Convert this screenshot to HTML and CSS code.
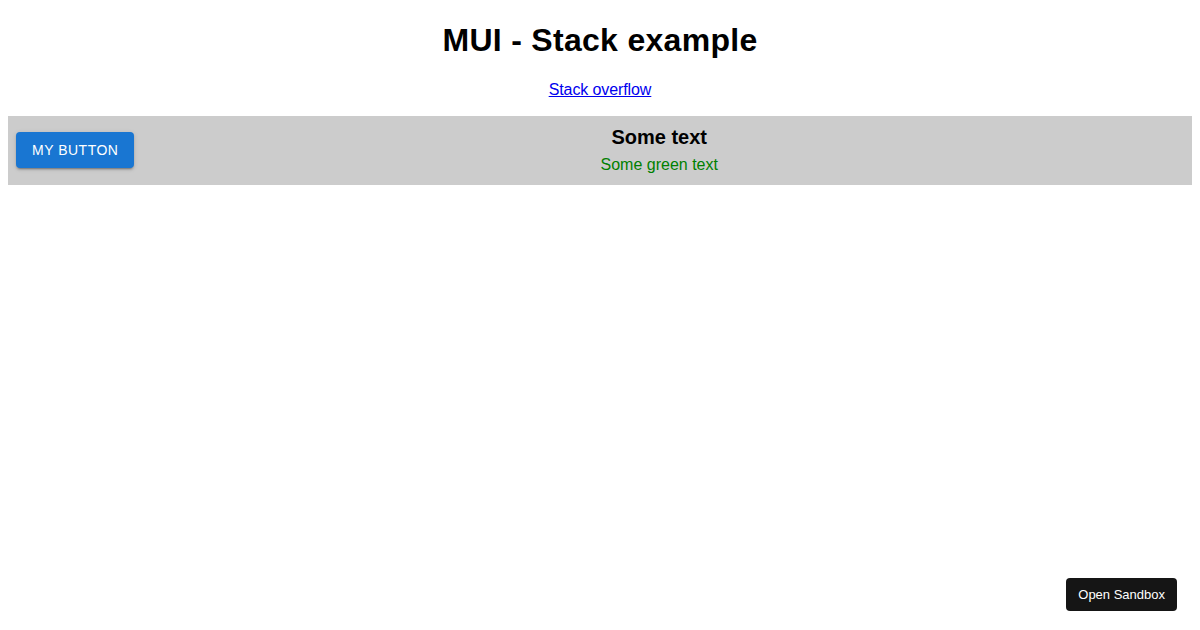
FILE: index.html
```html
<!DOCTYPE html>
<html lang="en">
<head>
<meta charset="utf-8">
<title>MUI - Stack example</title>
<link rel="stylesheet" href="styles.css">
</head>
<body>
<div class="app">
  <h1 class="title">MUI - Stack example</h1>
  <p class="links"><a href="#">Stack overflow</a></p>
  <div class="stack">
    <button class="mui-btn" type="button">My button</button>
    <div class="texts">
      <div class="heading">Some text</div>
      <div class="green">Some green text</div>
    </div>
  </div>
</div>
<a class="sandbox" href="#">Open Sandbox</a>
</body>
</html>
```
FILE: styles.css
```css
html, body {
  background: #fff;
}
body {
  margin: 0 8px;
  padding: 0;
  font-family: "Liberation Sans", Arial, sans-serif;
  color: #000;
}
.app {
  text-align: center;
  padding-top: 0.1px;
}
.title {
  font-size: 32px;
  font-weight: 700;
  line-height: 38.4px;
  letter-spacing: 0.3px;
  margin: 21.34px 0 21.44px;
}
.links {
  font-size: 16px;
  line-height: 18.4px;
  margin: 16px 0;
}
.links a {
  color: #0000ee;
  letter-spacing: -0.1px;
}
.stack {
  display: flex;
  flex-direction: row;
  align-items: center;
  background: #cccccc;
  padding: 10.5px 8px;
}
.mui-btn {
  font-family: "Liberation Sans", Arial, sans-serif;
  font-weight: 400;
  font-size: 14px;
  line-height: 24.5px;
  letter-spacing: 0.5px;
  text-transform: uppercase;
  color: #fff;
  background: #1976d2;
  border: 0;
  border-radius: 4px;
  padding: 6px 16px;
  box-shadow: 0 3px 1px -2px rgba(0,0,0,0.2), 0 2px 2px 0 rgba(0,0,0,0.14), 0 1px 5px 0 rgba(0,0,0,0.12);
  cursor: pointer;
}
.texts {
  flex: 1;
  display: flex;
  flex-direction: column;
  align-items: center;
  gap: 6.5px;
}
.heading {
  font-size: 20px;
  font-weight: 700;
  line-height: 23px;
}
.green {
  font-size: 16px;
  line-height: 18.4px;
  color: green;
}
.sandbox {
  position: fixed;
  right: 23px;
  bottom: 19px;
  background: #151515;
  color: #fff;
  font-family: "Liberation Sans", Arial, sans-serif;
  font-size: 13px;
  line-height: 15px;
  padding: 9px 12px;
  border-radius: 4px;
  text-decoration: none;
}
```
